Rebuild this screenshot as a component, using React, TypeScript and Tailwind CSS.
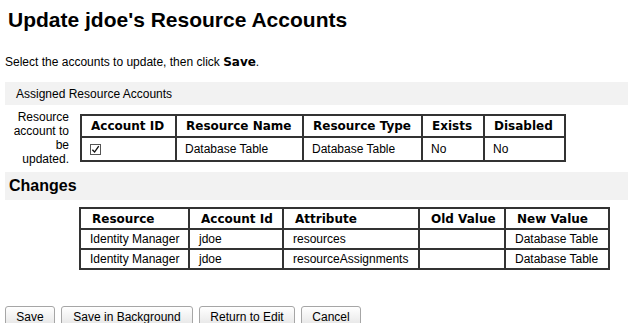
import React from 'react'

const sans = "font-['Liberation_Sans',Arial,sans-serif]"
const dejavu = "font-['DejaVu_Sans',sans-serif]"

const accountCols = [
  { label: 'Account ID', w: 'w-[95px]' },
  { label: 'Resource Name', w: 'w-[127px]' },
  { label: 'Resource Type', w: 'w-[119px]' },
  { label: 'Exists', w: 'w-[62px]' },
  { label: 'Disabled', w: 'w-[81px]' },
]

const changeCols = [
  { label: 'Resource', w: 'w-[109px]' },
  { label: 'Account Id', w: 'w-[94px]' },
  { label: 'Attribute', w: 'w-[136px]' },
  { label: 'Old Value', w: 'w-[86px]' },
  { label: 'New Value', w: 'w-[104px]' },
]

const changes = [
  ['Identity Manager', 'jdoe', 'resources', '', 'Database Table'],
  ['Identity Manager', 'jdoe', 'resourceAssignments', '', 'Database Table'],
]

const buttons = [
  { label: 'Save', w: 'w-[50px]' },
  { label: 'Save in Background', w: 'w-[132px]' },
  { label: 'Return to Edit', w: 'w-[96px]' },
  { label: 'Cancel', w: 'w-[60px]' },
]

function Checkbox() {
  return (
    <span className="inline-flex h-[11px] w-[11px] items-center justify-center border border-[#555] bg-white align-middle">
      <svg viewBox="0 0 10 10" className="h-[9px] w-[9px]">
        <path d="M1.5 5.2 L4 7.8 L8.6 1.2" fill="none" stroke="#111" strokeWidth="1.5" />
      </svg>
    </span>
  )
}

function Button({ label, w }: { label: string; w: string }) {
  return (
    <button className={`${w} h-[22px] rounded-[3px] border border-[#a6a6a6] bg-gradient-to-b from-white to-[#e4e4e4] text-[12px] leading-none text-black`}>
      {label}
    </button>
  )
}

export default function App() {
  return (
    <div className={`${sans} min-h-[323px] overflow-hidden bg-white pl-[5px] text-[12px] text-black`}>
      <h1 className="mt-[8px] h-[24px] pl-[3px] text-[21px] font-bold leading-[24px]">
        Update jdoe's Resource Accounts
      </h1>

      <p className="mt-[23px] h-[14px] leading-[14px]">
        Select the accounts to update, then click <span className={`${dejavu} font-bold`}>Save</span>.
      </p>

      <div className="mt-[13px] flex h-[23px] items-center bg-[#f2f2f2] pl-[11px]">Assigned Resource Accounts</div>

      {/* resource accounts table */}
      <div className="mt-[9px] flex items-start gap-[11px]">
        <div className="-mt-[4px] w-[64px] pl-[6px] text-right leading-[14px]">
          Resource account to be updated.
        </div>
        <table className="border-separate border-spacing-0 border border-[#333]">
          <thead>
            <tr>
              {accountCols.map((c) => (
                <th
                  key={c.label}
                  className={`${dejavu} ${c.w} h-[22px] border border-[#333] pl-[9px] text-left text-[12px] font-bold`}
                >
                  {c.label}
                </th>
              ))}
            </tr>
          </thead>
          <tbody>
            <tr>
              <td className="h-[24px] border border-[#333] pl-[8px]">
                <Checkbox />
              </td>
              <td className="border border-[#333] pl-[8px]">Database Table</td>
              <td className="border border-[#333] pl-[8px]">Database Table</td>
              <td className="border border-[#333] pl-[8px]">No</td>
              <td className="border border-[#333] pl-[8px]">No</td>
            </tr>
          </tbody>
        </table>
      </div>

      <div className="mt-[6px] flex h-[28px] items-center bg-[#f2f2f2] pl-[4px] text-[16px] font-bold">Changes</div>

      {/* changes table */}
      <table className="ml-[74px] mt-[7px] border-separate border-spacing-0 border border-[#333]">
        <thead>
          <tr>
            {changeCols.map((c) => (
              <th
                key={c.label}
                className={`${dejavu} ${c.w} h-[21px] border border-[#333] pl-[11px] text-left text-[12px] font-bold`}
              >
                {c.label}
              </th>
            ))}
          </tr>
        </thead>
        <tbody>
          {changes.map((row, i) => (
            <tr key={i}>
              {row.map((v, j) => (
                <td key={j} className="h-[20px] border border-[#333] pl-[9px]">
                  {v}
                </td>
              ))}
            </tr>
          ))}
        </tbody>
      </table>

      <div className="mt-[36px] flex gap-[6px]">
        {buttons.map((b) => (
          <Button key={b.label} label={b.label} w={b.w} />
        ))}
      </div>
    </div>
  )
}
